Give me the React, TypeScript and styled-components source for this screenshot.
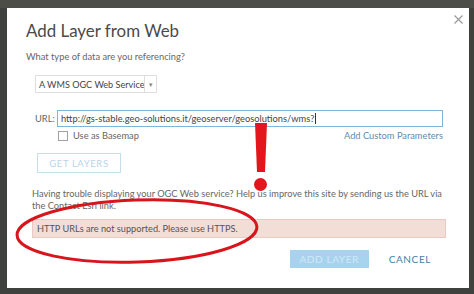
import { createGlobalStyle, styled } from 'styled-components'

const GlobalStyle = createGlobalStyle`
    html, body {
        margin: 0;
        padding: 0;
        background: #464644;
    }
    * { box-sizing: border-box; }
`

const Backdrop = styled.div`
    width: 474px;
    height: 294px;
    padding: 8px 5px 6px 7px;
    background: linear-gradient(180deg, #4d4d48 0px, #4d4d48 8px, #3f413f 8px);
    font-family: Lato, 'Noto Sans', sans-serif;
`

const Dialog = styled.div`
    position: relative;
    width: 462px;
    height: 280px;
    background: #fff;
    padding: 11px 0 0 19px;
    display: flex;
    flex-direction: column;
    color: #5c5c5c;
`

const Title = styled.h1`
    margin: 0;
    font-size: 16.9px;
    line-height: 24px;
    font-weight: 400;
    color: #4a4a4a;
`

const Close = styled.svg`
    position: absolute;
    top: 7px;
    right: 6px;
`

const Question = styled.p`
    margin: 8px 0 0 0;
    font-size: 9.3px;
    line-height: 12px;
    color: #666;
`

const Body = styled.div`
    padding-left: 9px;
    display: flex;
    flex-direction: column;
`

const Select = styled.div`
    margin-top: 12px;
    width: 122px;
    height: 18px;
    border: 1px solid #dedede;
    display: flex;
    align-items: center;
    font-size: 9.1px;
    color: #444;
    span { flex: 1; padding-left: 3px; white-space: nowrap; }
    b {
        width: 13px;
        height: 100%;
        border-left: 1px solid #dedede;
        display: flex;
        align-items: center;
        justify-content: center;
        font-size: 6px;
        font-weight: 400;
        color: #888;
    }
`

const UrlRow = styled.div`
    margin-top: 17px;
    display: flex;
    align-items: center;
    gap: 4px;
    label { font-size: 9.3px; color: #666; width: 18px; }
`

const UrlInput = styled.div`
    width: 386px;
    height: 17px;
    border: 1px solid #7db6d6;
    padding-left: 3px;
    font-size: 9.3px;
    line-height: 15px;
    color: #444;
    white-space: nowrap;
    display: flex;
    i {
        width: 1px;
        height: 11px;
        margin: 2px 0 0 1px;
        background: #333;
    }
`

const OptionsRow = styled.div`
    margin: 3px 26px 0 23px;
    display: flex;
    align-items: center;
    justify-content: space-between;
    font-size: 9.3px;
    line-height: 12px;
`

const Check = styled.label`
    display: flex;
    align-items: center;
    gap: 5px;
    color: #666;
    &::before {
        content: '';
        width: 8px;
        height: 8px;
        border: 1px solid #a0a0a0;
    }
`

const Link = styled.span`
    color: #5b8db2;
`

const OutlineButton = styled.div`
    margin: 11px 0 0 2px;
    width: 84px;
    height: 20px;
    border: 1px solid #c6deec;
    display: flex;
    align-items: center;
    justify-content: center;
    font-size: 9.5px;
    letter-spacing: 0.6px;
    color: #b9d5e7;
`

const Help = styled.p`
    margin: 15px 20px 0 6px;
    font-size: 9.25px;
    line-height: 12px;
    color: #666;
`

const ErrorBox = styled.div`
    margin: 7px 23px 0 6px;
    height: 19px;
    background: #f3ddd7;
    border: 1px solid #ebc9c1;
    display: flex;
    align-items: center;
    padding-left: 4px;
    font-size: 9.2px;
    color: #555;
`

const Footer = styled.div`
    margin-top: 12px;
    padding-right: 38px;
    display: flex;
    justify-content: flex-end;
    align-items: center;
    gap: 20px;
`

const Button = styled.div<{ $primary?: boolean }>`
    height: 18px;
    width: ${p => p.$primary ? '79px' : 'auto'};
    display: flex;
    align-items: center;
    justify-content: center;
    font-size: 10px;
    letter-spacing: 0.6px;
    background: ${p => p.$primary ? '#a8d3ee' : 'transparent'};
    color: ${p => p.$primary ? '#d2e8f6' : '#3f7fa8'};
`

const Markup = styled.svg`
    position: absolute;
    left: -7px;
    top: -8px;
    pointer-events: none;
`

export default function App() {
    return (
        <>
            <GlobalStyle />
            <Backdrop>
                <Dialog>
                    <Title>Add Layer from Web</Title>
                    <Close width='9' height='9' viewBox='0 0 9 9'>
                        <path d='M0.5 0.5 L8.5 8.5 M8.5 0.5 L0.5 8.5' stroke='#9a9a9a' strokeWidth='1.2' />
                    </Close>
                    <Question>What type of data are you referencing?</Question>

                    <Body>
                        <Select>
                            <span>A WMS OGC Web Service</span>
                            <b>▼</b>
                        </Select>

                        <UrlRow>
                            <label>URL:</label>
                            <UrlInput>
                                http://gs-stable.geo-solutions.it/geoserver/geosolutions/wms?<i />
                            </UrlInput>
                        </UrlRow>

                        <OptionsRow>
                            <Check>Use as Basemap</Check>
                            <Link>Add Custom Parameters</Link>
                        </OptionsRow>

                        <OutlineButton>GET LAYERS</OutlineButton>
                    </Body>

                    <Help>
                        Having trouble displaying your OGC Web service? Help us improve this site by sending us the URL via
                        the Contact Esri link.
                    </Help>

                    <ErrorBox>HTTP URLs are not supported. Please use HTTPS.</ErrorBox>

                    <Footer>
                        <Button $primary>ADD LAYER</Button>
                        <Button>CANCEL</Button>
                    </Footer>

                    {/* hand-drawn annotation over the dialog */}
                    <Markup width='474' height='294' viewBox='0 0 474 294'>
                        <path d='M255 123 L267 123 L265 172 L257 172 Z' fill='#e3161d' />
                        <circle cx='260.5' cy='184.5' r='6.5' fill='#e3161d' />
                        <ellipse
                            cx='137' cy='231' rx='120' ry='31'
                            fill='none' stroke='#d8141c' strokeWidth='3'
                            transform='rotate(-2 137 231)'
                        />
                    </Markup>
                </Dialog>
            </Backdrop>
        </>
    )
}
